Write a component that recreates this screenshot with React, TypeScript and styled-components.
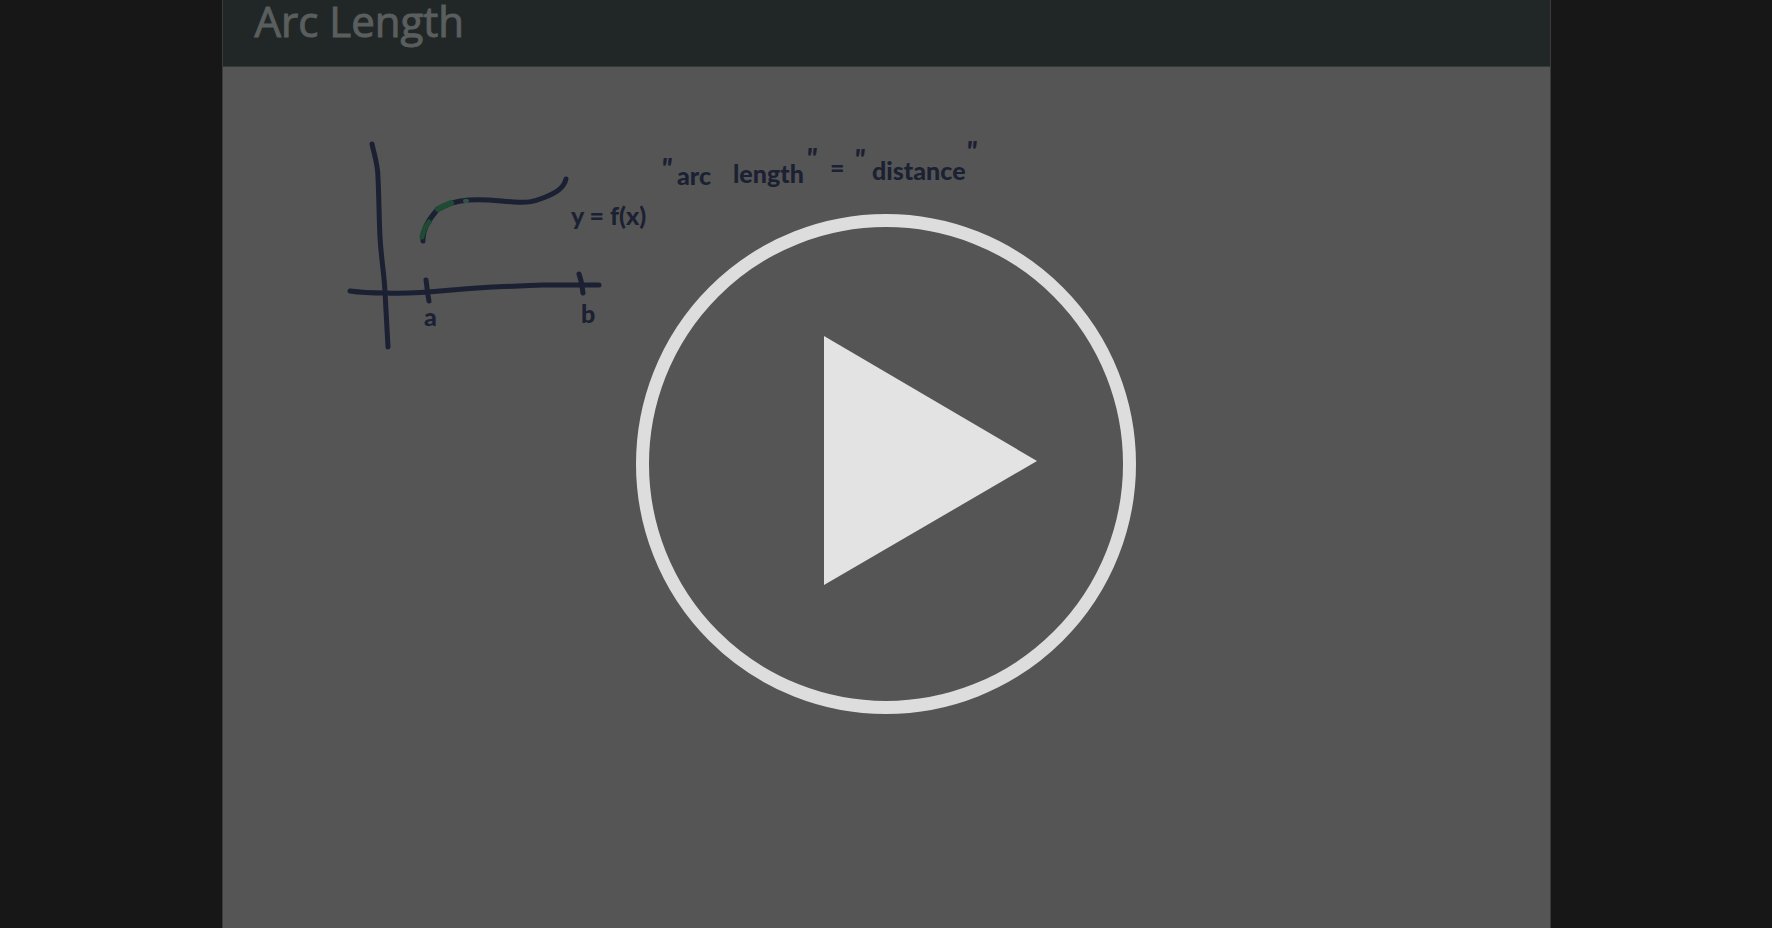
import React from "react";
import styled, { createGlobalStyle } from "styled-components";

const GlobalStyle = createGlobalStyle`
  *, *::before, *::after { box-sizing: border-box; }
  body { margin: 0; background: #171717; }
`;

const Player = styled.main`
  position: relative;
  display: flex;
  justify-content: center;
  min-height: 100vh;
  background: #171717;
`;

const Slide = styled.article`
  display: flex;
  flex-direction: column;
  width: 75%;
  border: solid #3a3b3c;
  border-width: 0 1px;
  background: #555555;
`;

const SlideHeader = styled.header`
  height: 67px;
  padding: 0 32px;
  border-bottom: 1px solid #35393a;
  background: #212727;
`;

const Title = styled.h1`
  margin: 0;
  color: #5a5e5e;
  font: 400 42px/42px "Open Sans", sans-serif;
  -webkit-text-stroke: 1px #5a5e5e;
`;

const Board = styled.div`
  flex: 1;
  padding: 53px 107px;
`;

const Sketch = styled.svg`
  display: block;
  width: 680px;
  max-width: 100%;
  overflow: visible;
`;

const Ink = styled.path<{ $color?: string; $width?: number }>`
  fill: none;
  stroke: ${({ $color }) => $color ?? "#1b2133"};
  stroke-width: ${({ $width }) => $width ?? 5};
  stroke-linecap: round;
  stroke-linejoin: round;
`;

const Note = styled.text`
  fill: #1b2133;
  font: 900 25px Lato, sans-serif;
`;

const Quote = styled.tspan`
  font-size: 28px;
  font-style: italic;
`;

const Overlay = styled.div`
  position: absolute;
  inset: 0;
  display: flex;
  align-items: center;
  justify-content: center;
`;

const PlayButton = styled.button`
  display: flex;
  align-items: center;
  justify-content: center;
  width: 500px;
  height: 500px;
  padding: 0 0 7px 88px;
  border: 13px solid #dddddd;
  border-radius: 50%;
  background: transparent;
  cursor: pointer;
`;

const Triangle = styled.svg`
  display: block;
  flex: none;
  width: 213px;
  height: 249px;
  fill: #e3e3e3;
`;

const strokes = [
  // vertical and horizontal axes
  "M42 24C44 34 48 44 48 58C49 78 49 98 50 117C51 137 54 152 55 172L58 227",
  "M20 171C34 173 45 173 56 173C82 174 101 172 122 170C154 167 188 166 212 165L269 165",
  // marks for the interval ends
  "M96 160C97 165 97 172 99 181",
  "M249 154C252 162 252 167 253 173",
  // the function
  "M93 121C92 108 101 97 107 90C115 84 127 81 139 80C158 79 168 81 184 82C197 83 203 82 213 78C226 73 234 68 236 59",
];

const labels = [
  { x: 241, y: 105, text: "y = f(x)" },
  { x: 94, y: 206, text: "a" },
  { x: 251, y: 203, text: "b" },
];

export default function App() {
  return (
    <>
      <GlobalStyle />
      <Player>
        <Slide>
          <SlideHeader>
            <Title>Arc Length</Title>
          </SlideHeader>
          <Board>
            <Sketch viewBox="0 0 680 240">
              {strokes.map((d) => (
                <Ink key={d} d={d} />
              ))}
              <Ink $color="#1f4a34" d="M92 117C93 111 96 106 99 102" />
              <Ink $color="#1f4a34" $width={6} d="M108 89C112 87 116 85 121 83" />
              <Ink $color="#2d5548" $width={4} d="M135 81L137 81" />
              {labels.map(({ x, y, text }) => (
                <Note key={text} x={x} y={y}>
                  {text}
                </Note>
              ))}
              <Note>
                <Quote x="331" y="59">"</Quote>
                <tspan x="347" y="65">arc</tspan>
                <tspan x="403" y="63">length</tspan>
                <Quote x="476" y="49">"</Quote>
                <tspan x="500" y="57">=</tspan>
                <Quote x="524" y="50">"</Quote>
                <tspan x="542" y="60">distance</tspan>
                <Quote x="636" y="42">"</Quote>
              </Note>
            </Sketch>
          </Board>
        </Slide>
        <Overlay>
          <PlayButton type="button" aria-label="Play">
            <Triangle viewBox="0 0 213 249" aria-hidden="true">
              <path d="M0 0L213 125L0 249Z" />
            </Triangle>
          </PlayButton>
        </Overlay>
      </Player>
    </>
  );
}
